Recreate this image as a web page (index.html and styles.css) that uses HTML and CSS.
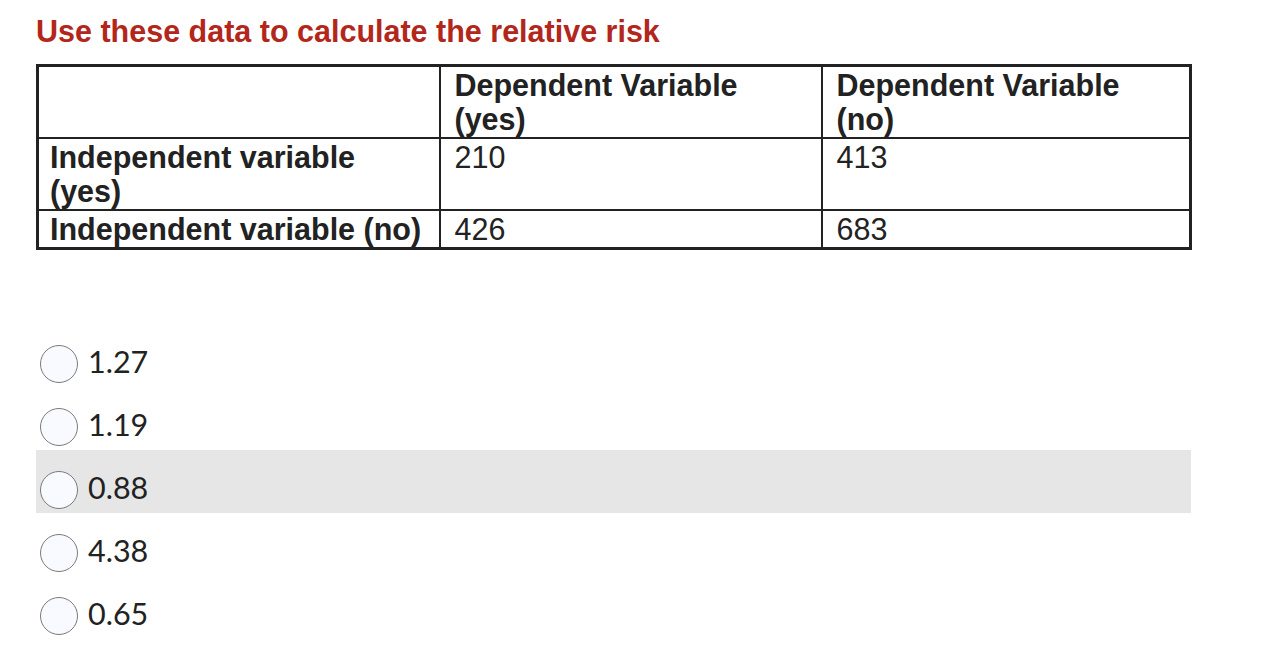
FILE: index.html
```html
<!DOCTYPE html>
<html>
<head>
<meta charset="utf-8">
<link rel="stylesheet" href="styles.css">
</head>
<body>
<div class="page">
  <h1 class="title">Use these data to calculate the relative risk</h1>
  <table class="data">
    <colgroup>
      <col class="c1"><col class="c2"><col class="c3">
    </colgroup>
    <tr class="head">
      <th></th>
      <th>Dependent Variable<br>(yes)</th>
      <th>Dependent Variable<br>(no)</th>
    </tr>
    <tr class="r1">
      <th>Independent variable<br>(yes)</th>
      <td>210</td>
      <td>413</td>
    </tr>
    <tr class="r2">
      <th>Independent variable (no)</th>
      <td>426</td>
      <td>683</td>
    </tr>
  </table>
  <ul class="answers">
    <li class="answer"><span class="radio"></span><span class="label">1.27</span></li>
    <li class="answer"><span class="radio"></span><span class="label">1.19</span></li>
    <li class="answer hover"><span class="radio"></span><span class="label">0.88</span></li>
    <li class="answer"><span class="radio"></span><span class="label">4.38</span></li>
    <li class="answer"><span class="radio"></span><span class="label">0.65</span></li>
  </ul>
</div>
</body>
</html>
```
FILE: styles.css
```css
html, body {
  margin: 0;
  padding: 0;
  background: #ffffff;
}
.page {
  padding: 0 0 0 36px;
  width: 1155px;
}
.title {
  margin: 0;
  padding-top: 12px;
  height: 64px;
  box-sizing: border-box;
  font-family: "Liberation Sans", Arial, sans-serif;
  font-weight: bold;
  font-size: 30.5px;
  line-height: 38px;
  color: #b3261b;
}
.data {
  border-collapse: collapse;
  border: 3px solid #222222;
  width: 1153px;
  table-layout: fixed;
  font-family: "Liberation Sans", Arial, sans-serif;
  font-size: 30.5px;
  line-height: 34px;
  color: #222222;
}
.c1 { width: 402px; }
.c2 { width: 382px; }
.c3 { width: 369px; }
.data th, .data td {
  border: 2px solid #222222;
  text-align: left;
  vertical-align: top;
  padding: 1px 12px 1px 14px;
}
.data th { font-weight: bold; }
.data td { font-weight: normal; }
.data tr > :first-child { padding-left: 11px; }
.r2 th, .r2 td { height: 34px; }
.answers {
  list-style: none;
  margin: 74px 0 0 0;
  padding: 0;
  width: 1155px;
}
.answer {
  display: flex;
  align-items: center;
  height: 63px;
  padding-left: 4px;
  padding-top: 17px;
  box-sizing: border-box;
}
.answer.hover {
  background: #e6e6e6;
}
.radio {
  width: 36px;
  height: 36px;
  border: 1px solid #7a7a7a;
  border-radius: 50%;
  background: #f9faff;
  flex: none;
}
.label {
  margin-left: 10px;
  font-family: Lato, "Liberation Sans", sans-serif;
  font-size: 30.5px;
  color: #222222;
  line-height: 36px;
  margin-top: -6px;
}
```
